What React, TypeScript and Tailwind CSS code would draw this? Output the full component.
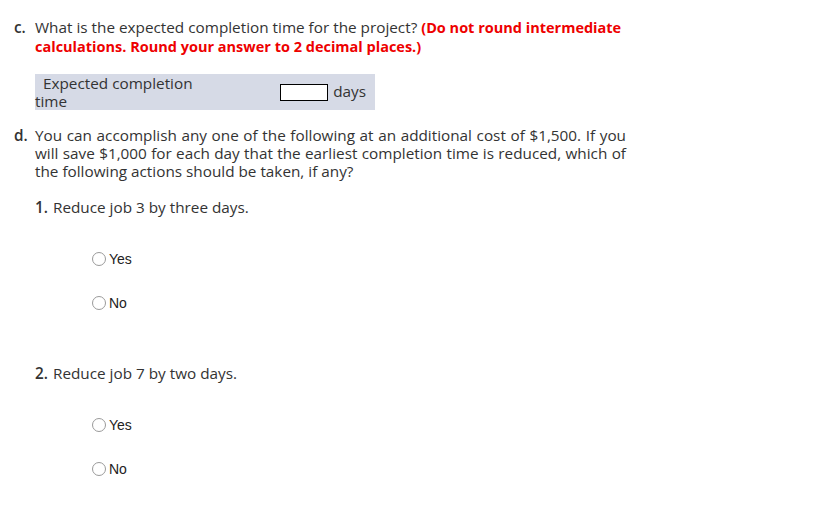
import React from "react";

function Radio({ label }: { label: string }) {
  return (
    <label className="flex items-center gap-[3px] h-[18px]">
      <span className="w-[14px] h-[14px] rounded-full border border-[#9a9a9a] bg-white inline-block" />
      <span className="text-[14px] text-[#222] font-['Liberation_Sans',Arial,sans-serif]">{label}</span>
    </label>
  );
}

function Choice({ n, text }: { n: string; text: string }) {
  return (
    <div className="flex flex-col">
      <div className="flex gap-[5px]">
        <span className="font-semibold">{n}</span>
        <span>{text}</span>
      </div>
      <div className="flex flex-col gap-[26px] pl-[57px] mt-[34px]">
        <Radio label="Yes" />
        <Radio label="No" />
      </div>
    </div>
  );
}

export default function App() {
  return (
    <div className="w-[821px] h-[505px] bg-white text-[#333] font-['Open_Sans',sans-serif] text-[15.3px] leading-[18px] pl-[14px] pt-[18px]">
      <div className="flex w-[612px]">
        <span className="w-[21px] font-semibold">c.</span>
        <p className="flex-1">
          What is the expected completion time for the project?{" "}
          <span className="text-[#ee0000] font-bold text-[14.5px]">
            (Do not round intermediate calculations. Round your answer to 2 decimal places.)
          </span>
        </p>
      </div>

      <div className="ml-[21px] mt-[18px] w-[340px] h-[36px] bg-[#d6dae6] flex items-center">
        <div className="w-[160px] leading-[18px] indent-[8px]">Expected completion time</div>
        <div className="flex-1 flex justify-end items-center pr-[9px] gap-[5px]">
          <input className="w-[48px] h-[17px] border border-black bg-white" />
          <span className="-mt-[2px]">days</span>
        </div>
      </div>

      <div className="flex w-[612px] mt-[16px]">
        <span className="w-[21px] font-semibold">d.</span>
        <p className="flex-1 text-justify">
          You can accomplish any one of the following at an additional cost of $1,500. If you will save $1,000 for each day that the earliest completion time is reduced, which of the following actions should be taken, if any?
        </p>
      </div>

      <div className="ml-[21px] mt-[18px] flex flex-col gap-[52px]">
        <Choice n="1." text="Reduce job 3 by three days." />
        <Choice n="2." text="Reduce job 7 by two days." />
      </div>
    </div>
  );
}
